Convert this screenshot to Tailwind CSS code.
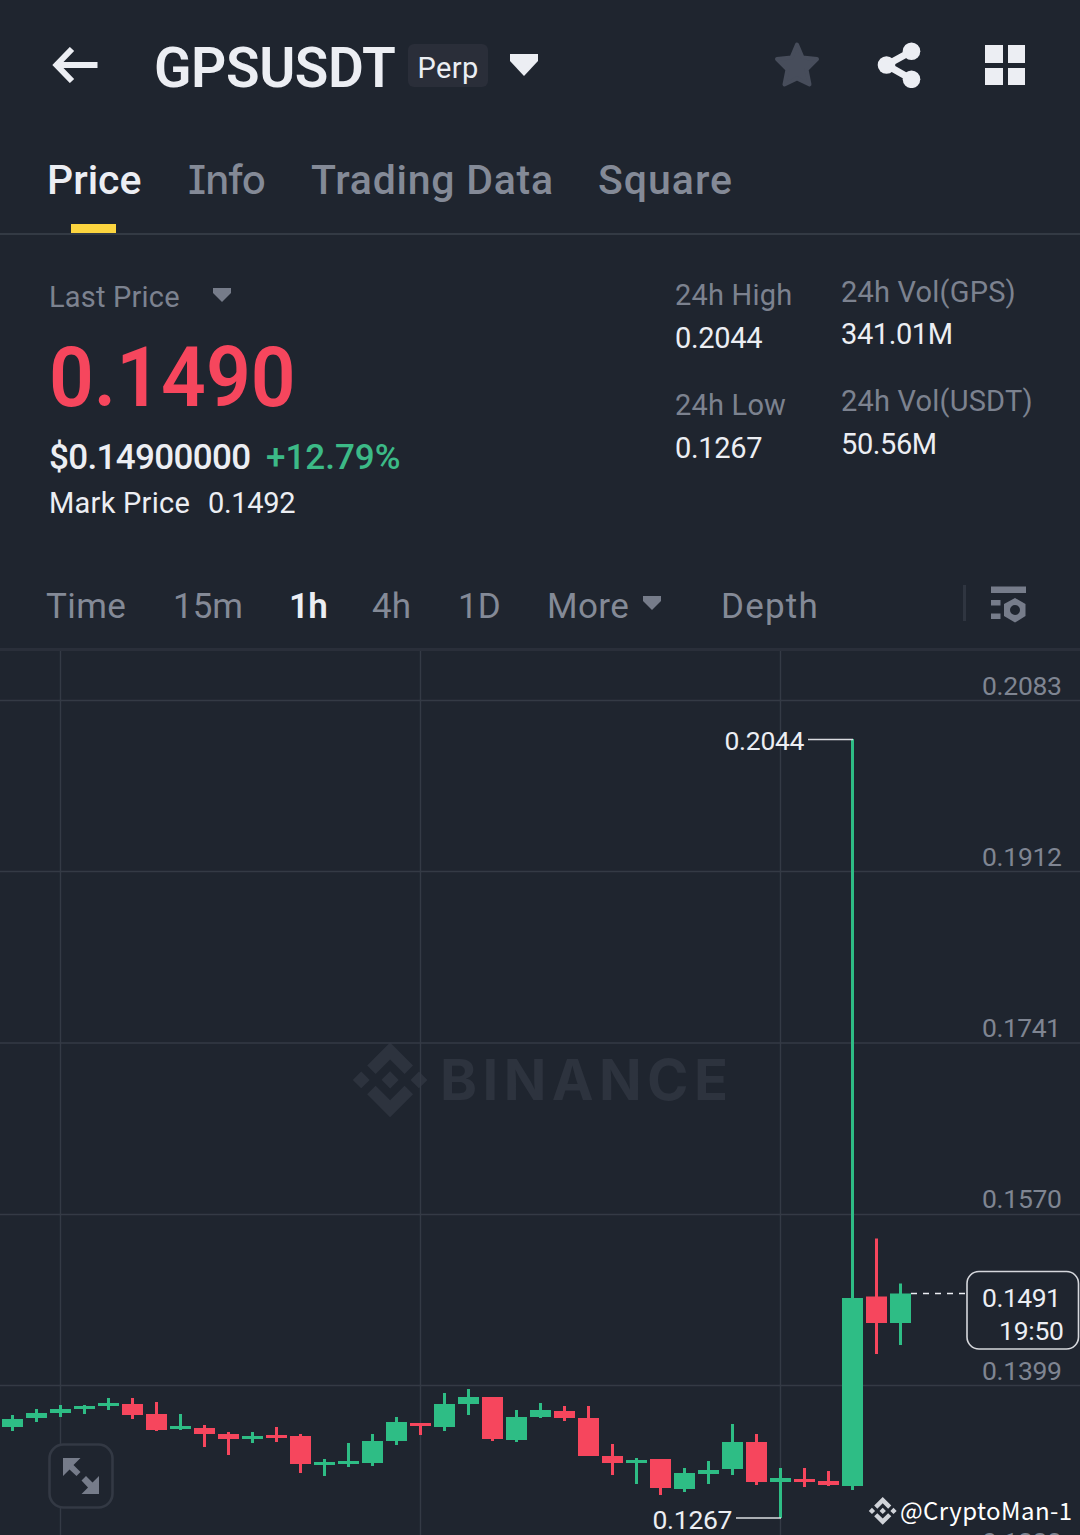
<!DOCTYPE html>
<html lang="en">
<head>
  <meta charset="UTF-8" />
  <meta name="viewport" content="width=device-width, initial-scale=1.0" />
  <title>GPSUSDT Perp</title>
  <script src="https://cdn.jsdelivr.net/npm/@tailwindcss/browser@4"></script>
</head>
<body class="bg-[#1f252f] w-[1080px] h-[1535px] overflow-hidden font-['Roboto','Liberation_Sans',sans-serif] text-[#eceef3] whitespace-nowrap">

  <!-- header -->
  <header class="h-[130px] flex items-center">
    <svg class="ml-[52px] w-[46px] h-9 shrink-0" viewBox="0 0 46 36" fill="none" stroke="#eceef3" stroke-width="6">
      <path d="M45.5 18H6M20 2 4.500 18 20 34" />
    </svg>
    <h1 class="ml-14 w-[254px] pt-1.5 text-[55px] leading-none font-semibold tracking-[-0.4px]">GPSUSDT</h1>
    <div class="w-20 h-[43px] rounded-md bg-[#2a2e39] flex items-center justify-center pt-1.5 text-[29px] leading-none tracking-[0.4px]">Perp</div>
    <svg class="ml-[22px] w-7 h-[22px]" viewBox="0 0 28 22"><path d="M0 0H28V7L14 22 0 7Z" fill="#eceef3" /></svg>
    <div class="ml-auto mr-[55px] flex items-center">
      <svg class="w-12 h-12" viewBox="0 0 48 48" fill="#474d5b" stroke="#474d5b" stroke-width="4" stroke-linejoin="round">
        <path d="M24 3.500 29.500 16.500 44 18 33.500 28.500 36.500 43.500 24 37.500 11.500 43.500 14.500 28.500 4 18 18.500 16.500Z" />
      </svg>
      <svg class="ml-14 w-[46px] h-[46px]" viewBox="0 0 46 46">
        <path d="M34.500 9.300 9.500 23 34.500 37.300" fill="none" stroke="#eceef3" stroke-width="7" />
        <circle cx="34.500" cy="9.300" r="8.800" fill="#eceef3" />
        <circle cx="9.500" cy="23" r="8.800" fill="#eceef3" />
        <circle cx="34.500" cy="37.300" r="8.800" fill="#eceef3" />
      </svg>
      <div class="ml-[62px] grid grid-cols-2 gap-[5px]">
        <i class="size-[17.500px] bg-[#eceef3]"></i>
        <i class="size-[17.500px] bg-[#eceef3]"></i>
        <i class="size-[17.500px] bg-[#eceef3]"></i>
        <i class="size-[17.500px] bg-[#eceef3]"></i>
      </div>
    </div>
  </header>

  <!-- tabs -->
  <nav class="h-[105px] border-b-2 border-[#333a44] flex pl-[47px] text-[41px] leading-[100px] font-medium text-[#848a97]">
    <div class="relative w-[141px] text-[#eceef3]">Price
      <span class="absolute left-6 bottom-0 w-[45px] h-[9px] bg-[#fcd53f]"></span>
    </div>
    <div class="w-[123px] font-['Inter'] text-[40px] tracking-[-0.8px] [font-feature-settings:'cv08']">Info</div>
    <div class="w-[287px] tracking-[0.75px]">Trading Data</div>
    <div class="tracking-[1px]">Square</div>
  </nav>

  <!-- ticker -->
  <section class="h-[329px] flex text-[29px] leading-9">
    <div class="w-[675px] shrink-0 pl-[49px] pt-11">
      <div class="flex items-center text-[#7c828f]">
        <span class="w-[164px] tracking-[0.2px]">Last Price</span>
        <svg class="w-[18px] h-[14px] -mt-1" viewBox="0 0 18 14"><path d="M0 0H18V5L9 14 0 5Z" fill="#767c8a" /></svg>
      </div>
      <div class="mt-[21px] w-fit origin-left scale-x-[.935] text-[84px] leading-[84px] font-semibold text-[#f6465d]">0.1490</div>
      <div class="mt-[18px] flex text-[35px] leading-10 font-medium">
        <span class="w-[217px] tracking-[-0.65px]">$0.14900000</span>
        <span class="text-[#3cba87]">+12.79%</span>
      </div>
      <div class="mt-[7px] flex">
        <span class="w-[159px] tracking-[0.25px]">Mark Price</span>
        <span class="tracking-[-0.3px]">0.1492</span>
      </div>
    </div>
    <div class="w-[166px] shrink-0 pt-[42px] tracking-[-0.3px]">
      <div class="tracking-[0.2px] text-[#7c828f]">24h High</div>
      <div class="mt-[7px]">0.2044</div>
      <div class="mt-[31px] tracking-[0.2px] text-[#7c828f]">24h Low</div>
      <div class="mt-[7px]">0.1267</div>
    </div>
    <div class="pt-[39px] tracking-[-0.4px]">
      <div class="tracking-[0.2px] text-[#7c828f]">24h Vol(GPS)</div>
      <div class="mt-1.5">341.01M</div>
      <div class="mt-[31px] tracking-[0.2px] text-[#7c828f]">24h Vol(USDT)</div>
      <div class="mt-[7px]">50.56M</div>
    </div>
  </section>

  <!-- intervals -->
  <div class="h-[87px] border-b-[3px] border-[#2a2f3a] pl-[46px] pr-[54px] pt-0.5 flex items-center text-[35px] text-[#848a97]">
    <span class="w-[127px] tracking-[0.4px]">Time</span>
    <span class="w-[116px]">15m</span>
    <span class="w-[83px] font-semibold tracking-[-0.8px] text-[#eceef3]">1h</span>
    <span class="w-[86px]">4h</span>
    <span class="w-[89px]">1D</span>
    <span class="w-[96px] tracking-[0.4px]">More</span>
    <svg class="w-[18px] h-[14px] -mt-2" viewBox="0 0 18 14"><path d="M0 0H18V5L9 14 0 5Z" fill="#767c8a" /></svg>
    <span class="ml-[60px] tracking-[1.2px]">Depth</span>
    <span class="ml-auto w-[3px] h-9 -mt-2 bg-[#2f3540]"></span>
    <svg class="ml-[25px] w-[35px] h-[37px] -mt-1.5" viewBox="0 0 35 37" fill="#767c8a">
      <path d="M0 0.500H35V7H0ZM0 14H9.500V19.500H0ZM0 27.500H9.500V33H0Z" />
      <path fill-rule="evenodd" d="M24 12 34.500 18V30L24 36.500 13 30V18ZM24 19A5 5 0 1 0 24 29 5 5 0 1 0 24 19Z" />
    </svg>
  </div>

  <!-- chart -->
  <svg class="block w-[1080px] h-[884px]" viewBox="0 651 1080 884">
    <defs>
      <path id="logo" d="M38.730 53.200l24.590-24.580 24.600 24.600 14.300-14.310L63.320 0l-38.900 38.900zM0 63.310l14.300-14.310 14.310 14.310-14.310 14.300zM38.730 73.410l24.590 24.590 24.600-24.600 14.310 14.290-38.900 38.910-38.910-38.880zM98 63.310l14.300-14.310 14.310 14.300-14.310 14.320zM77.830 63.300L63.320 48.780 48.810 63.280l14.510 14.500z" />
    </defs>
    <g fill="#2d333e">
      <use href="#logo" transform="translate(352.800 1042.600) scale(.589)" />
      <text x="440" y="1100" class="font-['Inter'] font-bold text-[56px]" textLength="288">BINANCE</text>
    </g>
    <path d="M60.500 651V1535M420.500 651V1535M780.500 651V1535M0 700.500H1080M0 871.500H1080M0 1043H1080M0 1214.500H1080M0 1385.500H1080" stroke="#343a45" stroke-width="1.400" />

    <g class="text-[26.500px]" fill="#7f8592">
      <text x="982" y="695" textLength="80">0.2083</text>
      <text x="982" y="866" textLength="80">0.1912</text>
      <text x="982" y="1037" textLength="79">0.1741</text>
      <text x="982" y="1208" textLength="80">0.1570</text>
      <text x="982" y="1380" textLength="80">0.1399</text>
      <text x="982" y="1551" textLength="80">0.1228</text>
    </g>

    <g id="candles"></g>

    <!-- high and low markers -->
    <g class="text-[26.500px]" fill="#eceef3">
      <text x="724.500" y="750" textLength="80">0.2044</text>
      <text x="652.500" y="1529" textLength="80">0.1267</text>
    </g>
    <path d="M808 739.500H853M736 1518H781" stroke="#d9dbe0" stroke-width="1.600" />

    <!-- last price -->
    <path d="M911 1293.500H966" stroke="#eceef3" stroke-width="1.600" stroke-dasharray="6 6" />
    <rect x="967" y="1271.500" width="111.500" height="77.500" rx="12" fill="#1f252f" stroke="#d5d7dc" stroke-width="1.600" />
    <g class="text-[26.500px]" fill="#eceef3">
      <text x="982" y="1307" textLength="79">0.1491</text>
      <text x="999" y="1340" textLength="65">19:50</text>
    </g>

    <!-- expand button -->
    <rect x="49.500" y="1444.500" width="63" height="63" rx="14" fill="#1f252f" stroke="#333944" stroke-width="2.600" />
    <g fill="#767c8a">
      <path d="M63 1458H80.500L73.500 1465 80.500 1472 76.500 1476 69.500 1469.500 63 1476Z" />
      <path d="M99 1494H81.500L88 1487.500 81.500 1480.500 86 1476 92.500 1482.500 99 1476Z" />
    </g>

    <!-- author -->
    <use href="#logo" transform="translate(868.800 1497) scale(.22)" fill="#d0d3d9" />
    <text x="900" y="1519.500" class="font-['Noto_Sans_CJK_SC'] font-normal text-[24px]" fill="#ffffff" textLength="172">@CryptoMan-1</text>
  </svg>

  <script>
    // [up, body top, body bottom, wick top, wick bottom]
    const candles = [
      [1, 1419, 1427, 1415, 1431], [1, 1413, 1418, 1409, 1422], [1, 1409, 1413, 1405, 1417],
      [1, 1406, 1409, 1405, 1414], [1, 1403, 1406, 1398, 1410], [0, 1404, 1415, 1398, 1419],
      [0, 1414, 1430, 1402, 1431], [1, 1426, 1429, 1414, 1430], [0, 1428, 1434, 1425, 1447],
      [0, 1434, 1439, 1432, 1455], [1, 1436, 1439, 1432, 1443], [0, 1435, 1438, 1427, 1442],
      [0, 1436, 1464, 1434, 1473], [1, 1462, 1465, 1459, 1476], [1, 1461, 1464, 1443, 1467],
      [1, 1441, 1463, 1434, 1466], [1, 1422, 1441, 1417, 1445], [0, 1423, 1426, 1423, 1435],
      [1, 1404, 1427, 1393, 1431], [1, 1397, 1404, 1389, 1415], [0, 1397, 1439, 1397, 1441],
      [1, 1417, 1440, 1410, 1442], [1, 1410, 1417, 1403, 1418], [0, 1411, 1418, 1406, 1421],
      [0, 1418, 1456, 1406, 1456], [0, 1456, 1463, 1444, 1475], [1, 1460, 1463, 1458, 1484],
      [0, 1459, 1488, 1459, 1495], [1, 1473, 1489, 1468, 1492], [1, 1470, 1474, 1461, 1484],
      [1, 1442, 1469, 1424, 1475], [0, 1442, 1482, 1434, 1485], [1, 1478, 1482, 1468, 1518],
      [0, 1479, 1482, 1468, 1487], [0, 1481, 1485, 1471, 1486], [1, 1298, 1486, 739, 1490],
      [0, 1296.5, 1323, 1238.5, 1354], [1, 1293.5, 1323, 1283.5, 1345],
    ];
    document.getElementById('candles').innerHTML = candles.map(([up, top, bottom, high, low], i) => {
      const x = 2 + i * 24;
      return `<g fill="${up ? '#2ebd85' : '#f6465d'}">
        <rect x="${x + 9}" y="${high}" width="3" height="${low - high}" />
        <rect x="${x}" y="${top}" width="21" height="${bottom - top}" />
      </g>`;
    }).join('');
  </script>
</body>
</html>
